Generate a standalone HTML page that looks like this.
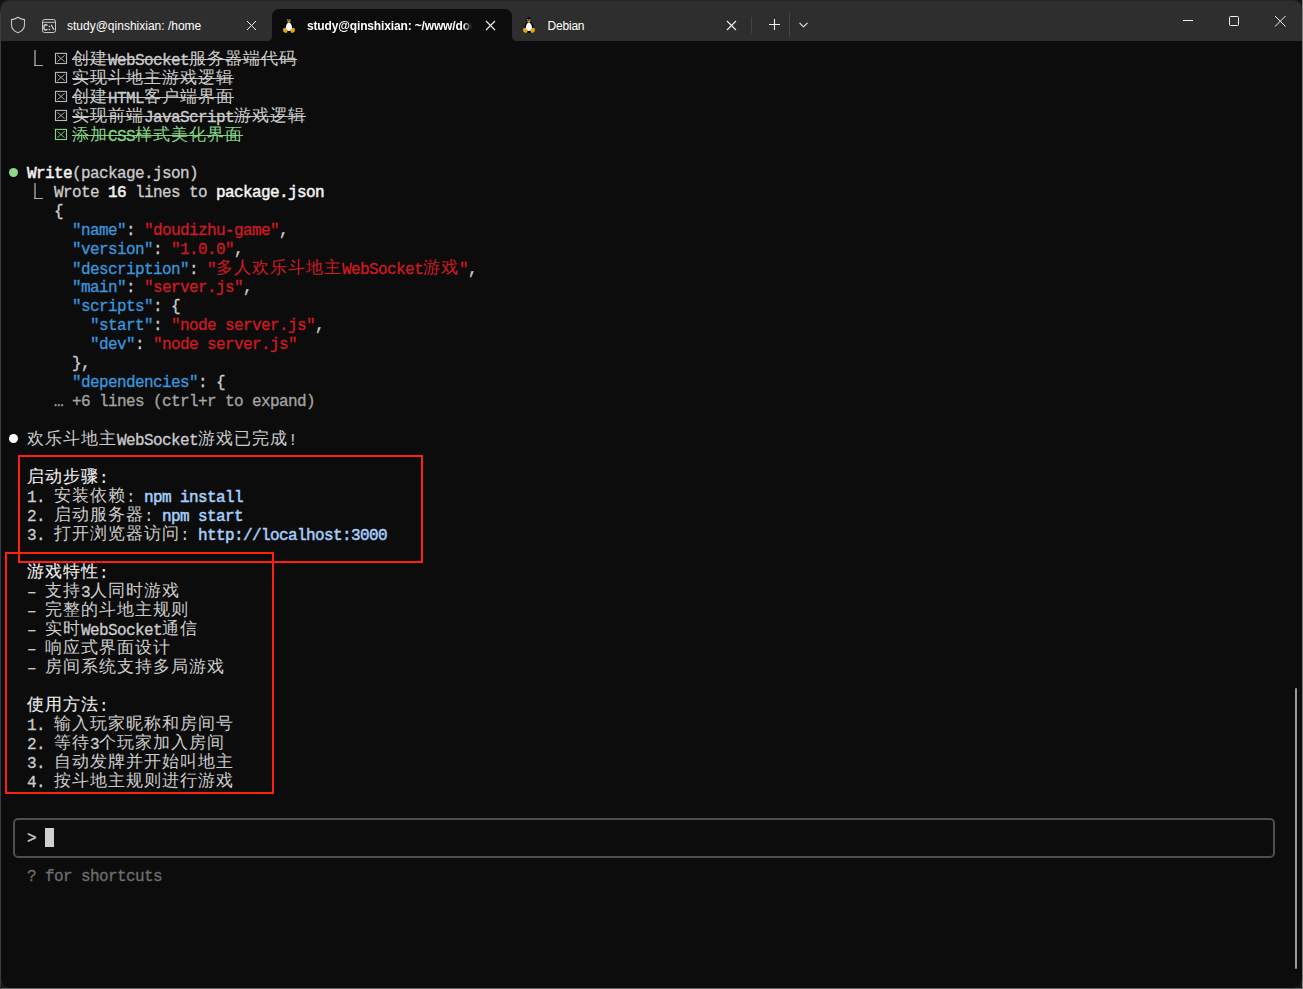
<!DOCTYPE html>
<html><head><meta charset="utf-8">
<style>
html,body{margin:0;padding:0;}
body{width:1303px;height:989px;overflow:hidden;background:#141414;position:relative;font-family:"Liberation Sans",sans-serif;}
#win{position:absolute;left:1px;top:1px;width:1301px;height:987px;border-radius:8px;box-shadow:0 0 0 0.5px rgba(90,90,90,0.5);background:#0c0c0c;overflow:hidden;}
#bar{position:absolute;left:0;top:-1px;width:1301px;height:41px;background:#2e2e2e;}
.abs{position:absolute;}
.tabtxt{position:absolute;font-family:"Liberation Sans",sans-serif;font-size:12px;color:#ffffff;white-space:nowrap;line-height:14px;}
#atab{position:absolute;left:271px;top:9px;width:240px;height:32px;background:#0c0c0c;border-radius:7px 7px 0 0;}
#atab:before{content:"";position:absolute;left:-5px;bottom:0;width:5px;height:5px;background:radial-gradient(circle at 0 0,transparent 4.5px,#0c0c0c 5.5px);}
#atab:after{content:"";position:absolute;right:-5px;bottom:0;width:5px;height:5px;background:radial-gradient(circle at 100% 0,transparent 4.5px,#0c0c0c 5.5px);}
.r{position:absolute;height:19px;line-height:19px;white-space:pre;font-family:"Liberation Mono",monospace;font-size:16px;color:#cccccc;}
.r i{font-style:normal;}
.r .n{letter-spacing:-0.6px;-webkit-text-stroke:0.3px currentColor;}
.r .b .n{-webkit-text-stroke:0.5px currentColor;}
.r .w{display:inline-block;position:relative;top:-1px;width:18px;text-align:left;font-size:17px;font-weight:normal;letter-spacing:0;}
.r .p{text-align:left;font-size:16px;text-indent:0px;top:0;}
.d{color:#cccccc;}
.b{color:#f4f4f4;}
.k{color:#3a96dd;}
.s{color:#d01a22;}
.c{color:#a6cffa;}
.r .c .n{-webkit-text-stroke:0.5px currentColor;}
.g{color:#86d486;}
.dim{color:#999999;}
.dim2{color:#a4a4a4;}
.dim3{color:#6e6e6e;}
.hd{color:#f0f0f0;}
.r .hd .w{-webkit-text-stroke:0.1px currentColor;}
.st{}
.box{position:absolute;border:2px solid #ff1e12;box-sizing:border-box;}
</style></head><body>
<div class="abs" style="left:1302px;top:0;width:1px;height:989px;background:#8a8a8a"></div>
<div class="abs" style="left:0;top:988px;width:1303px;height:1px;background:#6a6a6a"></div>
<div class="abs" style="left:0;top:12px;width:1px;height:977px;background:#34343a"></div>
<div id="win">
  <div id="bar">
    <!-- shield -->
    <svg class="abs" style="left:9px;top:16px" width="16" height="18" viewBox="0 0 16 18">
      <path d="M8 1.2 C6 2.6 3.8 3.4 1.5 3.6 V8.8 C1.5 12.6 4.2 15.4 8 16.8 C11.8 15.4 14.5 12.6 14.5 8.8 V3.6 C12.2 3.4 10 2.6 8 1.2 Z" fill="none" stroke="#c4c4c4" stroke-width="1.1"/>
    </svg>
    <!-- terminal icon -->
    <svg class="abs" style="left:40px;top:18px" width="16" height="16" viewBox="0 0 16 16">
      <rect x="1.5" y="1.5" width="13" height="13" rx="2" fill="none" stroke="#c8c8c8" stroke-width="1"/>
      <line x1="1.5" y1="4.3" x2="14.5" y2="4.3" stroke="#c8c8c8" stroke-width="1"/>
      <path d="M6.4 7.6 C6 7 5.4 6.8 4.8 6.8 C3.6 6.8 2.9 7.8 2.9 9.4 C2.9 11 3.6 12 4.8 12 C5.4 12 6 11.8 6.4 11.2" fill="none" stroke="#d0d0d0" stroke-width="1.4"/>
      <rect x="7.7" y="7.8" width="1.4" height="1.4" fill="#d0d0d0"/>
      <rect x="7.7" y="10.8" width="1.4" height="1.4" fill="#d0d0d0"/>
      <path d="M10.2 6.8 L13 12" stroke="#d0d0d0" stroke-width="1.3"/>
    </svg>
    <div class="tabtxt" style="left:66px;top:18.5px">study@qinshixian: /home</div>
    <svg class="abs" style="left:245px;top:20px" width="11" height="11" viewBox="0 0 11 11"><path d="M1 1 L10 10 M10 1 L1 10" stroke="#f0f0f0" stroke-width="1"/></svg>

    <div id="atab">
      <div class="tabtxt" style="left:35px;top:10px;width:165px;overflow:hidden;font-weight:bold;letter-spacing:-0.15px;-webkit-mask-image:linear-gradient(to right,#000 156px,transparent 165px);">study@qinshixian: ~/www/doudizhu</div>
      <svg class="abs" style="left:213px;top:11px" width="11" height="11" viewBox="0 0 11 11"><path d="M1 1 L10 10 M10 1 L1 10" stroke="#f0f0f0" stroke-width="1.1"/></svg>
    </div>
    <!-- penguin 1 -->
    <svg class="abs" style="left:280px;top:16px" width="16" height="18" viewBox="-1 0 18 18" preserveAspectRatio="none">
      <path d="M7.9 1.2 C6.1 1.2 5.3 2.6 5.3 4.4 C5.3 5.8 4.6 6.9 3.6 8.4 C2.4 10.2 1.8 12.4 2.4 14.6 L4.2 16.8 L11.6 16.8 L13.4 14.6 C14 12.4 13.4 10.2 12.2 8.4 C11.2 6.9 10.5 5.8 10.5 4.4 C10.5 2.6 9.7 1.2 7.9 1.2 Z" fill="#000000"/>
      <path d="M7.9 6.6 C6.4 6.6 5.4 8.2 4.7 10 C4 11.8 4.1 14.6 7.9 14.9 C11.7 14.6 11.8 11.8 11.1 10 C10.4 8.2 9.4 6.6 7.9 6.6 Z" fill="#ffffff"/>
      <ellipse cx="6.7" cy="3.8" rx="0.9" ry="0.9" fill="#9a9a9a"/>
      <ellipse cx="9.1" cy="3.8" rx="0.9" ry="0.9" fill="#9a9a9a"/>
      <path d="M5.9 5 Q7.9 4.2 9.9 5 Q9.4 6.6 7.9 6.6 Q6.4 6.6 5.9 5 Z" fill="#e3a714"/>
      <path d="M1.4 13 C2 11.8 3.6 11.4 4.8 12.4 C5.9 13.3 6.5 15 6.2 16.2 C5.4 17.2 3.6 17 2.2 16 C1.3 15.2 1.1 13.8 1.4 13 Z" fill="#e3a714"/>
      <path d="M14.6 13 C14 11.8 12.4 11.4 11.2 12.4 C10.1 13.3 9.5 15 9.8 16.2 C10.6 17.2 12.4 17 13.8 16 C14.7 15.2 14.9 13.8 14.6 13 Z" fill="#e3a714"/>
    </svg>
    <!-- penguin 2 -->
    <svg class="abs" style="left:520px;top:16px" width="16" height="18" viewBox="-1 0 18 18" preserveAspectRatio="none">
      <path d="M7.9 1.2 C6.1 1.2 5.3 2.6 5.3 4.4 C5.3 5.8 4.6 6.9 3.6 8.4 C2.4 10.2 1.8 12.4 2.4 14.6 L4.2 16.8 L11.6 16.8 L13.4 14.6 C14 12.4 13.4 10.2 12.2 8.4 C11.2 6.9 10.5 5.8 10.5 4.4 C10.5 2.6 9.7 1.2 7.9 1.2 Z" fill="#000000"/>
      <path d="M7.9 6.6 C6.4 6.6 5.4 8.2 4.7 10 C4 11.8 4.1 14.6 7.9 14.9 C11.7 14.6 11.8 11.8 11.1 10 C10.4 8.2 9.4 6.6 7.9 6.6 Z" fill="#ffffff"/>
      <ellipse cx="6.7" cy="3.8" rx="0.9" ry="0.9" fill="#9a9a9a"/>
      <ellipse cx="9.1" cy="3.8" rx="0.9" ry="0.9" fill="#9a9a9a"/>
      <path d="M5.9 5 Q7.9 4.2 9.9 5 Q9.4 6.6 7.9 6.6 Q6.4 6.6 5.9 5 Z" fill="#e3a714"/>
      <path d="M1.4 13 C2 11.8 3.6 11.4 4.8 12.4 C5.9 13.3 6.5 15 6.2 16.2 C5.4 17.2 3.6 17 2.2 16 C1.3 15.2 1.1 13.8 1.4 13 Z" fill="#e3a714"/>
      <path d="M14.6 13 C14 11.8 12.4 11.4 11.2 12.4 C10.1 13.3 9.5 15 9.8 16.2 C10.6 17.2 12.4 17 13.8 16 C14.7 15.2 14.9 13.8 14.6 13 Z" fill="#e3a714"/>
    </svg>
    <div class="tabtxt" style="left:546.5px;top:18.5px;letter-spacing:-0.2px">Debian</div>
    <svg class="abs" style="left:724.5px;top:20px" width="11" height="11" viewBox="0 0 11 11"><path d="M1 1 L10 10 M10 1 L1 10" stroke="#f0f0f0" stroke-width="1.1"/></svg>
    <div class="abs" style="left:750px;top:17px;width:1px;height:16px;background:#444"></div>
    <svg class="abs" style="left:766.5px;top:18px" width="13" height="13" viewBox="0 0 13 13"><path d="M6.5 1 V12 M1 6.5 H12" stroke="#f0f0f0" stroke-width="1.1"/></svg>
    <div class="abs" style="left:788px;top:13px;width:1px;height:24px;background:#444"></div>
    <svg class="abs" style="left:797px;top:21px" width="11" height="8" viewBox="0 0 11 8"><path d="M1.5 1.8 L5.5 5.8 L9.5 1.8" fill="none" stroke="#f0f0f0" stroke-width="1.1"/></svg>
    <!-- window controls -->
    <div class="abs" style="left:1182px;top:20px;width:10px;height:1px;background:#f0f0f0"></div>
    <div class="abs" style="left:1228px;top:16px;width:8px;height:8px;border:1px solid #f0f0f0;border-radius:1.5px"></div>
    <svg class="abs" style="left:1273px;top:15px" width="12" height="12" viewBox="0 0 12 12"><path d="M1 1 L11.5 11.5 M11.5 1 L1 11.5" stroke="#f0f0f0" stroke-width="1"/></svg>
  </div>

  <div id="term" class="abs" style="left:-1px;top:-1px;width:1303px;height:989px;">
<div class="abs" style="left:72px;top:59px;width:225px;height:1px;background:#c4c4c4"></div>
<div class="r" style="left:72px;top:51px"><span class="d st"><i class="w">创</i><i class="w">建</i><i class="n">WebSocket</i><i class="w">服</i><i class="w">务</i><i class="w">器</i><i class="w">端</i><i class="w">代</i><i class="w">码</i></span></div>
<div class="abs" style="left:72px;top:78px;width:162px;height:1px;background:#c4c4c4"></div>
<div class="r" style="left:72px;top:70px"><span class="d st"><i class="w">实</i><i class="w">现</i><i class="w">斗</i><i class="w">地</i><i class="w">主</i><i class="w">游</i><i class="w">戏</i><i class="w">逻</i><i class="w">辑</i></span></div>
<div class="abs" style="left:72px;top:97px;width:162px;height:1px;background:#c4c4c4"></div>
<div class="r" style="left:72px;top:89px"><span class="d st"><i class="w">创</i><i class="w">建</i><i class="n">HTML</i><i class="w">客</i><i class="w">户</i><i class="w">端</i><i class="w">界</i><i class="w">面</i></span></div>
<div class="abs" style="left:72px;top:116px;width:234px;height:1px;background:#c4c4c4"></div>
<div class="r" style="left:72px;top:108px"><span class="d st"><i class="w">实</i><i class="w">现</i><i class="w">前</i><i class="w">端</i><i class="n">JavaScript</i><i class="w">游</i><i class="w">戏</i><i class="w">逻</i><i class="w">辑</i></span></div>
<div class="abs" style="left:72px;top:135px;width:171px;height:1px;background:#86d486"></div>
<div class="r" style="left:72px;top:127px"><span class="g st"><i class="w">添</i><i class="w">加</i><i class="n">CSS</i><i class="w">样</i><i class="w">式</i><i class="w">美</i><i class="w">化</i><i class="w">界</i><i class="w">面</i></span></div>
<div class="r" style="left:27px;top:165px"><span class="b"><i class="n">Write</i></span><span class="d"><i class="n">(package.json)</i></span></div>
<div class="r" style="left:54px;top:184px"><span class="d"><i class="n">Wrote </i></span><span class="b"><i class="n">16</i></span><span class="d"><i class="n"> lines to </i></span><span class="b"><i class="n">package.json</i></span></div>
<div class="r" style="left:54px;top:203px"><span class="d"><i class="n">{</i></span></div>
<div class="r" style="left:72px;top:222px"><span class="k"><i class="n">&quot;name&quot;</i></span><span class="d"><i class="n">: </i></span><span class="s"><i class="n">&quot;doudizhu-game&quot;</i></span><span class="d"><i class="n">,</i></span></div>
<div class="r" style="left:72px;top:241px"><span class="k"><i class="n">&quot;version&quot;</i></span><span class="d"><i class="n">: </i></span><span class="s"><i class="n">&quot;1.0.0&quot;</i></span><span class="d"><i class="n">,</i></span></div>
<div class="r" style="left:72px;top:260px"><span class="k"><i class="n">&quot;description&quot;</i></span><span class="d"><i class="n">: </i></span><span class="s"><i class="n">&quot;</i><i class="w">多</i><i class="w">人</i><i class="w">欢</i><i class="w">乐</i><i class="w">斗</i><i class="w">地</i><i class="w">主</i><i class="n">WebSocket</i><i class="w">游</i><i class="w">戏</i><i class="n">&quot;</i></span><span class="d"><i class="n">,</i></span></div>
<div class="r" style="left:72px;top:279px"><span class="k"><i class="n">&quot;main&quot;</i></span><span class="d"><i class="n">: </i></span><span class="s"><i class="n">&quot;server.js&quot;</i></span><span class="d"><i class="n">,</i></span></div>
<div class="r" style="left:72px;top:298px"><span class="k"><i class="n">&quot;scripts&quot;</i></span><span class="d"><i class="n">: {</i></span></div>
<div class="r" style="left:90px;top:317px"><span class="k"><i class="n">&quot;start&quot;</i></span><span class="d"><i class="n">: </i></span><span class="s"><i class="n">&quot;node server.js&quot;</i></span><span class="d"><i class="n">,</i></span></div>
<div class="r" style="left:90px;top:336px"><span class="k"><i class="n">&quot;dev&quot;</i></span><span class="d"><i class="n">: </i></span><span class="s"><i class="n">&quot;node server.js&quot;</i></span></div>
<div class="r" style="left:72px;top:355px"><span class="d"><i class="n">},</i></span></div>
<div class="r" style="left:72px;top:374px"><span class="k"><i class="n">&quot;dependencies&quot;</i></span><span class="d"><i class="n">: {</i></span></div>
<div class="r" style="left:54px;top:393px"><span class="dim2"><i class="n">… +6 lines (ctrl+r to expand)</i></span></div>
<div class="r" style="left:27px;top:431px"><span class="d"><i class="w">欢</i><i class="w">乐</i><i class="w">斗</i><i class="w">地</i><i class="w">主</i><i class="n">WebSocket</i><i class="w">游</i><i class="w">戏</i><i class="w">已</i><i class="w">完</i><i class="w">成</i><i class="w p">!</i></span></div>
<div class="r" style="left:27px;top:469px"><span class="hd"><i class="w">启</i><i class="w">动</i><i class="w">步</i><i class="w">骤</i><i class="w p">:</i></span></div>
<div class="r" style="left:27px;top:488px"><span class="d"><i class="n">1. </i><i class="w">安</i><i class="w">装</i><i class="w">依</i><i class="w">赖</i><i class="w p">:</i></span><span class="c"><i class="n">npm install</i></span></div>
<div class="r" style="left:27px;top:507px"><span class="d"><i class="n">2. </i><i class="w">启</i><i class="w">动</i><i class="w">服</i><i class="w">务</i><i class="w">器</i><i class="w p">:</i></span><span class="c"><i class="n">npm start</i></span></div>
<div class="r" style="left:27px;top:526px"><span class="d"><i class="n">3. </i><i class="w">打</i><i class="w">开</i><i class="w">浏</i><i class="w">览</i><i class="w">器</i><i class="w">访</i><i class="w">问</i><i class="w p">:</i></span><span class="c"><i class="n">http://localhost:3000</i></span></div>
<div class="r" style="left:27px;top:564px"><span class="hd"><i class="w">游</i><i class="w">戏</i><i class="w">特</i><i class="w">性</i><i class="w p">:</i></span></div>
<div class="r" style="left:27px;top:583px"><span class="d"><i class="n">– </i><i class="w">支</i><i class="w">持</i><i class="n">3</i><i class="w">人</i><i class="w">同</i><i class="w">时</i><i class="w">游</i><i class="w">戏</i></span></div>
<div class="r" style="left:27px;top:602px"><span class="d"><i class="n">– </i><i class="w">完</i><i class="w">整</i><i class="w">的</i><i class="w">斗</i><i class="w">地</i><i class="w">主</i><i class="w">规</i><i class="w">则</i></span></div>
<div class="r" style="left:27px;top:621px"><span class="d"><i class="n">– </i><i class="w">实</i><i class="w">时</i><i class="n">WebSocket</i><i class="w">通</i><i class="w">信</i></span></div>
<div class="r" style="left:27px;top:640px"><span class="d"><i class="n">– </i><i class="w">响</i><i class="w">应</i><i class="w">式</i><i class="w">界</i><i class="w">面</i><i class="w">设</i><i class="w">计</i></span></div>
<div class="r" style="left:27px;top:659px"><span class="d"><i class="n">– </i><i class="w">房</i><i class="w">间</i><i class="w">系</i><i class="w">统</i><i class="w">支</i><i class="w">持</i><i class="w">多</i><i class="w">局</i><i class="w">游</i><i class="w">戏</i></span></div>
<div class="r" style="left:27px;top:697px"><span class="hd"><i class="w">使</i><i class="w">用</i><i class="w">方</i><i class="w">法</i><i class="w p">:</i></span></div>
<div class="r" style="left:27px;top:716px"><span class="d"><i class="n">1. </i><i class="w">输</i><i class="w">入</i><i class="w">玩</i><i class="w">家</i><i class="w">昵</i><i class="w">称</i><i class="w">和</i><i class="w">房</i><i class="w">间</i><i class="w">号</i></span></div>
<div class="r" style="left:27px;top:735px"><span class="d"><i class="n">2. </i><i class="w">等</i><i class="w">待</i><i class="n">3</i><i class="w">个</i><i class="w">玩</i><i class="w">家</i><i class="w">加</i><i class="w">入</i><i class="w">房</i><i class="w">间</i></span></div>
<div class="r" style="left:27px;top:754px"><span class="d"><i class="n">3. </i><i class="w">自</i><i class="w">动</i><i class="w">发</i><i class="w">牌</i><i class="w">并</i><i class="w">开</i><i class="w">始</i><i class="w">叫</i><i class="w">地</i><i class="w">主</i></span></div>
<div class="r" style="left:27px;top:773px"><span class="d"><i class="n">4. </i><i class="w">按</i><i class="w">斗</i><i class="w">地</i><i class="w">主</i><i class="w">规</i><i class="w">则</i><i class="w">进</i><i class="w">行</i><i class="w">游</i><i class="w">戏</i></span></div>
<div class="r" style="left:27px;top:830px"><span class="d"><i class="n">&gt;</i></span></div>
<div class="r" style="left:27px;top:868px"><span class="dim3"><i class="n">? for shortcuts</i></span></div>
<div class="abs" style="left:34px;top:50px;width:2px;height:16px;background:#747474"></div>
<div class="abs" style="left:34px;top:65px;width:9px;height:1px;background:#a8a8a8"></div>
<div class="abs" style="left:34px;top:183px;width:2px;height:16px;background:#747474"></div>
<div class="abs" style="left:34px;top:198px;width:9px;height:1px;background:#a8a8a8"></div>
<svg class="abs" style="left:54px;top:52px" width="14" height="13" viewBox="0 0 14 13"><rect x="1.5" y="1.4" width="11" height="10.1" fill="none" stroke="#b8b8b8" stroke-width="1.1"/><path d="M3.4 3.4 L10.6 9.6 M10.6 3.4 L3.4 9.6" stroke="#b8b8b8" stroke-width="0.9"/></svg>
<svg class="abs" style="left:54px;top:71px" width="14" height="13" viewBox="0 0 14 13"><rect x="1.5" y="1.4" width="11" height="10.1" fill="none" stroke="#b8b8b8" stroke-width="1.1"/><path d="M3.4 3.4 L10.6 9.6 M10.6 3.4 L3.4 9.6" stroke="#b8b8b8" stroke-width="0.9"/></svg>
<svg class="abs" style="left:54px;top:90px" width="14" height="13" viewBox="0 0 14 13"><rect x="1.5" y="1.4" width="11" height="10.1" fill="none" stroke="#b8b8b8" stroke-width="1.1"/><path d="M3.4 3.4 L10.6 9.6 M10.6 3.4 L3.4 9.6" stroke="#b8b8b8" stroke-width="0.9"/></svg>
<svg class="abs" style="left:54px;top:109px" width="14" height="13" viewBox="0 0 14 13"><rect x="1.5" y="1.4" width="11" height="10.1" fill="none" stroke="#b8b8b8" stroke-width="1.1"/><path d="M3.4 3.4 L10.6 9.6 M10.6 3.4 L3.4 9.6" stroke="#b8b8b8" stroke-width="0.9"/></svg>
<svg class="abs" style="left:54px;top:128px" width="14" height="13" viewBox="0 0 14 13"><rect x="1.5" y="1.4" width="11" height="10.1" fill="none" stroke="#86d486" stroke-width="1.1"/><path d="M3.4 3.4 L10.6 9.6 M10.6 3.4 L3.4 9.6" stroke="#86d486" stroke-width="0.9"/></svg>
<div class="abs" style="left:9px;top:168px;width:9px;height:9px;border-radius:50%;background:#8ad888"></div>
<div class="abs" style="left:9px;top:434px;width:9px;height:9px;border-radius:50%;background:#ffffff"></div>
<div class="box" style="left:18px;top:455px;width:405px;height:108px"></div>
<div class="box" style="left:5px;top:552px;width:269px;height:242px"></div>
<div class="abs" style="left:13px;top:818px;width:1262px;height:40px;box-sizing:border-box;border:2px solid #4e4e4e;border-radius:5px"></div>
<div class="abs" style="left:45px;top:828px;width:9px;height:19px;background:#d0d0d0"></div>
<div class="abs" style="left:1295px;top:688px;width:2px;height:281px;background:#9a9a9a;border-radius:1px"></div>
  </div>
</div>
</body></html>
